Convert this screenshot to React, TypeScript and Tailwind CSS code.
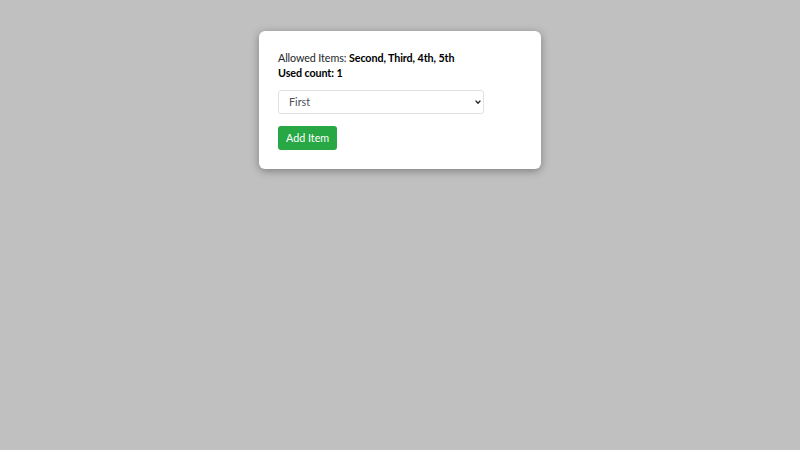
import { useState } from 'react';

const ITEMS = ['First', 'Second', 'Third', '4th', '5th'];

export default function App() {
  const [used, setUsed] = useState<string[]>(['First']);
  const [selected, setSelected] = useState('First');

  const allowed = ITEMS.filter(i => !used.includes(i));

  const handleAdd = () => {
    if (!used.includes(selected)) setUsed([...used, selected]);
  };

  return (
    <div
      className="min-h-screen bg-[#c0c0c0] pt-[31px] text-[#212529]"
      style={{ fontFamily: 'Lato, "Noto Sans", sans-serif' }}
    >
      <div className="mx-auto w-[282px] rounded-[6px] bg-white px-[19px] pt-[19px] pb-[19px] shadow-[0_2px_8px_rgba(0,0,0,0.35)]">
        <p className="text-[10.75px] leading-[15px] tracking-[-0.1px]">
          Allowed Items: <b className="font-bold text-black">{allowed.join(', ')}</b>
        </p>
        <p className="text-[10.75px] leading-[15px] tracking-[-0.1px] font-bold text-black">Used count: {used.length}</p>

        {/* Select */}
        <div className="relative mt-[10px] w-[206px]">
          <select
            value={selected}
            onChange={e => setSelected(e.target.value)}
            className="block h-[24px] w-full appearance-none rounded-[3px] border border-[#dee2e6] bg-white pl-[10px] pr-[20px] text-[10.75px] text-[#495057] outline-none"
          >
            {ITEMS.map(i => (
              <option key={i} value={i}>{i}</option>
            ))}
          </select>
          <svg
            className="pointer-events-none absolute right-[3px] top-[10px] h-[4px] w-[6px]"
            viewBox="0 0 6 4"
            fill="none"
            stroke="#222"
            strokeWidth="1.4"
          >
            <path d="M0.6 0.6 L3 3.2 L5.4 0.6" />
          </svg>
        </div>

        <button
          onClick={handleAdd}
          className="mt-[12px] block h-[24px] rounded-[3px] bg-[#28a745] px-[8px] text-[10.75px] text-white"
        >
          Add Item
        </button>
      </div>
    </div>
  );
}
